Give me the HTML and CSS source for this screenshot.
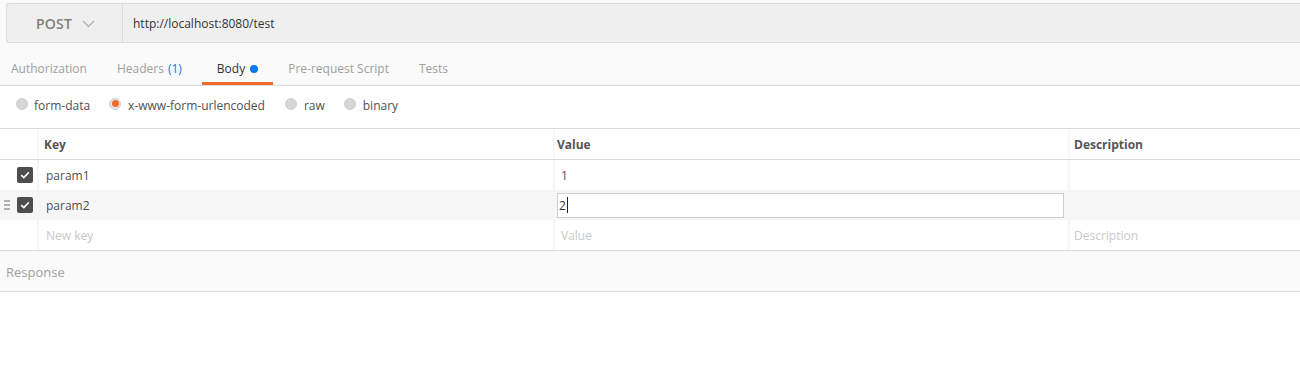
FILE: index.html
```html
<!DOCTYPE html>
<html>
<head>
<meta charset="utf-8">
<link rel="stylesheet" href="styles.css">
</head>
<body>
<div class="header">
  <div class="urlbar">
    <div class="method">
      <span class="method-name">POST</span>
      <svg class="chev" width="13" height="8" viewBox="0 0 13 8"><polyline points="1,1 6.5,6.5 12,1" fill="none" stroke="#b0b0b0" stroke-width="1.4"/></svg>
    </div>
    <div class="url">http://localhost:8080/test</div>
  </div>
  <div class="tabs">
    <div class="tab tab-first">Authorization</div>
    <div class="tab tab-headers">Headers <span class="count">(1)</span></div>
    <div class="tab active">Body <span class="dot"></span></div>
    <div class="tab">Pre-request Script</div>
    <div class="tab">Tests</div>
  </div>
</div>
<div class="modes">
  <label class="mode"><span class="radio"></span>form-data</label>
  <label class="mode"><span class="radio on"></span>x-www-form-urlencoded</label>
  <label class="mode"><span class="radio"></span>raw</label>
  <label class="mode"><span class="radio"></span>binary</label>
</div>
<div class="table">
  <div class="row head">
    <div class="c-check"></div>
    <div class="c-key">Key</div>
    <div class="c-val">Value</div>
    <div class="c-desc">Description</div>
  </div>
  <div class="row">
    <div class="c-check"><span class="cb"><svg width="10" height="8" viewBox="0 0 10 8"><polyline points="1.2,4.2 3.8,6.6 8.8,1.4" fill="none" stroke="#fff" stroke-width="1.6"/></svg></span></div>
    <div class="c-key">param1</div>
    <div class="c-val">1</div>
    <div class="c-desc"></div>
  </div>
  <div class="row hover">
    <div class="c-check"><span class="grip"><i></i><i></i><i></i></span><span class="cb"><svg width="10" height="8" viewBox="0 0 10 8"><polyline points="1.2,4.2 3.8,6.6 8.8,1.4" fill="none" stroke="#fff" stroke-width="1.6"/></svg></span></div>
    <div class="c-key">param2</div>
    <div class="c-val editing"><div class="input">2<span class="caret"></span></div></div>
    <div class="c-desc"></div>
  </div>
  <div class="row">
    <div class="c-check"></div>
    <div class="c-key ph">New key</div>
    <div class="c-val ph">Value</div>
    <div class="c-desc ph">Description</div>
  </div>
</div>
<div class="response">Response</div>
</body>
</html>
```

FILE: styles.css
```css
* { box-sizing: border-box; }
html, body { margin: 0; padding: 0; }
body {
  background: #fff;
  font-family: "Open Sans", "Liberation Sans", sans-serif;
  font-size: 12px;
  color: #333;
  width: 1300px;
  height: 387px;
  overflow: hidden;
}
.header {
  background: #fafafa;
  padding-top: 3px;
  border-bottom: 1px solid #dcdcdc;
}
.urlbar {
  margin-left: 6px;
  height: 40px;
  display: flex;
  background: #efefef;
  border: 1px solid #dcdcdc;
  border-right: none;
  border-radius: 3px 0 0 3px;
}
.method {
  width: 116px;
  border-right: 1px solid #dcdcdc;
  display: flex;
  align-items: center;
  padding-left: 29px;
}
.method-name {
  font-size: 14px;
  font-weight: 600;
  color: #808080;
  letter-spacing: 0.2px;
}
.chev { margin-left: 10px; margin-top: 1px; }
.url {
  display: flex;
  align-items: center;
  padding-left: 10px;
  font-size: 12px;
  color: #333;
}
.tabs {
  display: flex;
  height: 42px;
}
.tab {
  padding: 17px 15px 0;
  color: #a0a0a0;
  font-size: 12px;
  line-height: 18px;
  border-bottom: 3px solid transparent;
  display: flex;
  align-items: flex-start;
}
.tab-first { padding-left: 11px; }
.tab-headers { padding-right: 20px; }
.tab.active {
  color: #333;
  border-bottom-color: #f26b2b;
}
.count { color: #097bed; margin-left: 4px; }
.dot {
  display: inline-block;
  width: 8px;
  height: 8px;
  border-radius: 50%;
  background: #097bed;
  margin: 5px 0 0 5px;
}
.modes {
  height: 43px;
  border-bottom: 1px solid #dcdcdc;
  display: flex;
  align-items: center;
  padding-left: 16px;
  padding-bottom: 3px;
}
.mode {
  display: flex;
  align-items: center;
  color: #505050;
  font-size: 12px;
  margin-right: 19px;
}
.radio {
  width: 12px;
  height: 12px;
  border-radius: 50%;
  background: #d6d6d6;
  border: 1px solid #cfcfcf;
  margin-right: 6px;
  margin-top: -4px;
  display: flex;
  align-items: center;
  justify-content: center;
}
.mode:nth-child(n+2) .radio { margin-right: 7px; }
.radio.on { background: #e4e4e4; }
.radio.on::after {
  content: "";
  width: 7px;
  height: 7px;
  border-radius: 50%;
  background: #f26b2b;
}
.mode:nth-child(2) { margin-right: 20px; }
.table { border-bottom: 1px solid #dcdcdc; }
.row {
  display: grid;
  grid-template-columns: 37px 516px 515px 1fr;
  height: 30px;
}
.row.head {
  height: 31px;
  border-bottom: 1px solid #dcdcdc;
}
.row > div {
  display: flex;
  align-items: center;
  border-left: 2px solid #f6f6f6;
  font-size: 12px;
  color: #505050;
}
.row > .c-key { padding-left: 7px; }
.row > .c-val { padding-left: 6px; }
.row > .c-desc { padding-left: 4px; }
.row.head > .c-key { padding-left: 5px; }
.row.head > .c-val { padding-left: 2px; }
.row > .c-check { border-left: none; padding-left: 0; }
.row.head > div { font-weight: 700; color: #555; }
.row.hover { background: #f6f6f6; }
.row.hover > div { border-left-color: transparent; }
.ph { color: #c8c8c8 !important; }
.c-check { justify-content: flex-end; padding-right: 4px; }
.cb {
  width: 16px;
  height: 16px;
  border-radius: 2px;
  background: #4d4d4d;
  display: flex;
  align-items: center;
  justify-content: center;
}
.grip {
  display: flex;
  flex-direction: column;
  gap: 2px;
  margin-right: 7px;
}
.grip i {
  display: block;
  width: 6px;
  height: 2px;
  background: #b0b0b0;
}
.row > .c-val.editing { padding-left: 2px; padding-right: 4px; }
.input {
  width: 100%;
  height: 25px;
  border: 1px solid #cdcdcd;
  background: #fff;
  display: flex;
  align-items: center;
  padding-left: 1px;
  color: #333;
}
.caret {
  display: inline-block;
  width: 1px;
  height: 16px;
  background: #222;
  margin-left: 1px;
}
.response {
  height: 41px;
  background: #fafafa;
  border-bottom: 1px solid #dcdcdc;
  display: flex;
  align-items: center;
  padding-left: 6px;
  padding-top: 1px;
  font-size: 13px;
  color: #a0a0a0;
}
```
